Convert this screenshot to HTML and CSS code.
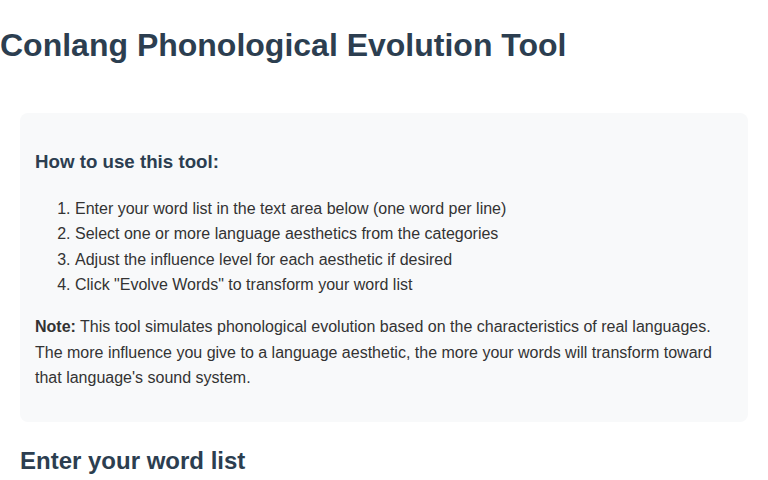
FILE: index.html
```html
<!DOCTYPE html>
<html lang="en">
<head>
<meta charset="utf-8">
<title>Conlang Phonological Evolution Tool</title>
<link rel="stylesheet" href="styles.css">
</head>
<body>
<h1 class="page-title">Conlang Phonological Evolution Tool</h1>
<main class="container">
  <section class="instructions">
    <h3 class="instructions-title">How to use this tool:</h3>
    <ol class="steps">
      <li>Enter your word list in the text area below (one word per line)</li>
      <li>Select one or more language aesthetics from the categories</li>
      <li>Adjust the influence level for each aesthetic if desired</li>
      <li>Click "Evolve Words" to transform your word list</li>
    </ol>
    <p class="note"><strong>Note:</strong> This tool simulates phonological evolution based on the characteristics of real languages. The more influence you give to a language aesthetic, the more your words will transform toward that language's sound system.</p>
  </section>
  <h2 class="section-title">Enter your word list</h2>
</main>
</body>
</html>
```
FILE: styles.css
```css
html, body {
  margin: 0;
  padding: 0;
  background: #ffffff;
}

body {
  font-family: "Liberation Sans", Arial, sans-serif;
  font-size: 16px;
  line-height: 1.6;
  color: #333333;
}

.page-title {
  margin: 20px 0 42px;
  font-size: 32px;
  font-weight: bold;
  color: #2c3e50;
}

.container {
  padding: 0 20px;
}

.instructions {
  background: #f8f9fa;
  border-radius: 8px;
  padding: 15px;
  margin-bottom: 20px;
}

.instructions-title {
  font-size: 18.72px;
  margin: 18.72px 0;
  color: #2c3e50;
}

.steps {
  margin: 16px 0;
  padding-left: 40px;
}

.note {
  margin: 16px 0;
}

.section-title {
  font-size: 24px;
  margin: 20px 0;
  color: #2c3e50;
}
```
